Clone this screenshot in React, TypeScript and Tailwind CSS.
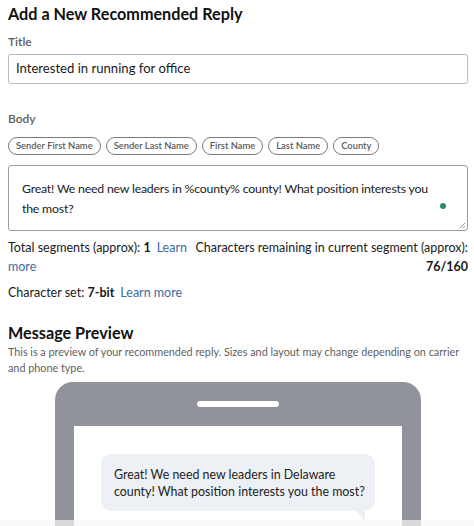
import React from "react"

const chips = ["Sender First Name", "Sender Last Name", "First Name", "Last Name", "County"]

export default function App() {
  return (
    <div className="relative w-[474px] h-[526px] overflow-hidden bg-white text-[#1a1a1a] font-['Lato','Liberation_Sans',sans-serif]">
      <div className="pl-2 pr-[6px]">
        <h2 className="pt-[3px] text-[16.2px] font-bold leading-[22px] text-[#111]">Add a New Recommended Reply</h2>

        <label className="block mt-[9px] text-[12px] font-semibold leading-[16px] text-[#5c5c5c]">Title</label>
        <div className="mt-[4px] h-[30px] flex items-center rounded-[3px] border border-[#b9b9b9] px-[7px] text-[13.1px]">
          Interested in running for office
        </div>

        <label className="block mt-[27px] text-[12px] font-semibold leading-[16px] text-[#5c5c5c]">Body</label>
        <div className="mt-[10px] flex gap-[5px]">
          {chips.map((c) => (
            <span
              key={c}
              className="h-[18px] flex items-center rounded-full border border-[#7a7a7a] px-[7px] text-[9.4px] font-semibold text-[#5a5a5a]"
            >
              {c}
            </span>
          ))}
        </div>

        <div className="relative mt-[10px] h-[66px] rounded-[3px] border border-[#9c9c9c] pl-[13px] pr-[24px] pt-[13px] text-[12.3px] leading-[20px] tracking-[-0.2px]">
          Great! We need new leaders in %county% county! What position interests you the most?
          <span className="absolute right-[21px] top-[37px] h-[6px] w-[6px] rounded-full bg-[#2f8a74]" />
          <svg className="absolute right-[1px] bottom-[1px]" width="7" height="7" viewBox="0 0 7 7">
            <path d="M6 1L1 6M6 4L4 6" stroke="#9a9a9a" strokeWidth="1" />
          </svg>
        </div>

        <div className="mt-[7px] flex justify-between text-[12.5px] leading-[19px]">
          <div className="w-[184px] shrink-0">
            Total segments (approx): <b>1</b>
            <span className="ml-[6px] text-[#3d6aa3]">Learn more</span>
          </div>
          <div className="w-[274px] text-right">
            Characters remaining in current segment (approx): <b>76/160</b>
          </div>
        </div>

        <div className="mt-[7px] text-[12.5px] leading-[19px]">
          Character set: <b>7-bit</b>
          <span className="ml-[6px] text-[#3d6aa3]">Learn more</span>
        </div>

        <h2 className="mt-[20px] text-[16.2px] font-bold leading-[22px] text-[#111]">Message Preview</h2>
        <p className="text-[10.8px] leading-[16px] text-[#606060]">
          This is a preview of your recommended reply. Sizes and layout may change depending on carrier and phone type.
        </p>

        <div className="ml-[47px] mt-[6px] w-[366px] rounded-t-[18px] bg-[#909399] px-[19px] pt-[19px]">
          <div className="mx-auto h-[6px] w-[82px] rounded-full bg-white" />
          <div className="mt-[19px] h-[200px] bg-white px-[27px] pt-[28px]">
            <div className="relative rounded-[10px] bg-[#edf1f6] pl-[13px] pr-[8px] pt-[12px] pb-[11px] text-[12.4px] leading-[17px] text-[#222]">
              Great! We need new leaders in Delaware county! What position interests you the most?
              <span className="absolute right-[10px] -bottom-[10px] h-0 w-0 border-l-[9px] border-t-[10px] border-l-transparent border-t-[#edf1f6]" />
            </div>
          </div>
        </div>
      </div>
      <div className="absolute bottom-0 left-0 right-0 h-[6px] bg-[#f6f6f6]/70" />
    </div>
  )
}
